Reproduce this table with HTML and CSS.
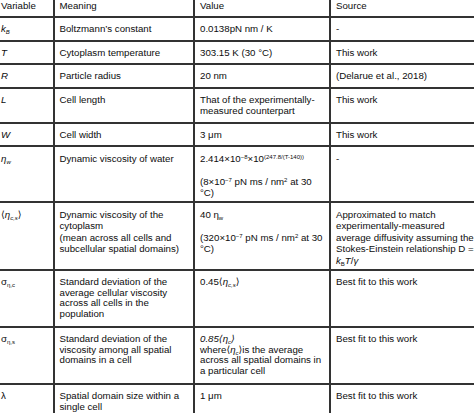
FILE: index.html
```html
<!DOCTYPE html>
<html>
<head>
<meta charset="utf-8">
<link rel="stylesheet" href="styles.css">
</head>
<body>
<div class="frame">
<table class="params">
<colgroup><col class="c1"><col class="c2"><col class="c3"><col class="c4"></colgroup>
<tr class="h23"><td>Variable</td><td>Meaning</td><td>Value</td><td>Source</td></tr>
<tr class="h24"><td><i>k</i><sub><i>B</i></sub></td><td>Boltzmann’s constant</td><td>0.0138pN nm / K</td><td>-</td></tr>
<tr class="h23"><td><i>T</i></td><td>Cytoplasm temperature</td><td>303.15 K (30 °C)</td><td>This work</td></tr>
<tr class="h24"><td><i>R</i></td><td>Particle radius</td><td>20 nm</td><td>(Delarue et al., 2018)</td></tr>
<tr class="h35"><td><i>L</i></td><td>Cell length</td><td>That of the experimentally-<br>measured counterpart</td><td>This work</td></tr>
<tr class="h23"><td><i>W</i></td><td>Cell width</td><td>3 μm</td><td>This work</td></tr>
<tr class="h56 loose"><td><i>η</i><sub><i>w</i></sub></td><td>Dynamic viscosity of water</td><td><p>2.414×10<sup>−8</sup>×10<sup>(247.8/(T-140))</sup></p><p class="gap">(8×10<sup>−7</sup> pN ms / nm<sup>2</sup> at 30<br>°C)</p></td><td>-</td></tr>
<tr class="h68 loose"><td>⟨<i>η</i><sub><i>c,s</i></sub>⟩</td><td>Dynamic viscosity of the<br>cytoplasm<br>(mean across all cells and<br>subcellular spatial domains)</td><td><p>40 η<sub>w</sub></p><p class="gap">(320×10<sup>−7</sup> pN ms / nm<sup>2</sup> at 30<br>°C)</p></td><td>Approximated to match<br>experimentally-measured<br>average diffusivity assuming the<br>Stokes-Einstein relationship D =<br><i>k</i><sub>B</sub><i>T</i>/<i>γ</i></td></tr>
<tr class="h57"><td>σ<sub>η,c</sub></td><td>Standard deviation of the<br>average cellular viscosity<br>across all cells in the<br>population</td><td>0.45⟨<i>η</i><sub><i>c,s</i></sub>⟩</td><td>Best fit to this work</td></tr>
<tr class="h57"><td>σ<sub>η,s</sub></td><td>Standard deviation of the<br>viscosity among all spatial<br>domains in a cell</td><td><i>0.85⟨η<sub>c</sub>⟩</i><br>where⟨<i>η</i><sub><i>c</i></sub>⟩is the average<br>across all spatial domains in<br>a particular cell</td><td>Best fit to this work</td></tr>
<tr class="h40"><td>λ</td><td>Spatial domain size within a<br>single cell</td><td>1 μm</td><td>Best fit to this work</td></tr>
</table>
</div>
</body>
</html>
```

FILE: styles.css
```css
html, body {
  margin: 0;
  padding: 0;
  background: #ffffff;
  overflow: hidden;
}

.frame {
  width: 474px;
  height: 413px;
  overflow: hidden;
}

.params {
  margin-top: -7px;
  margin-left: -6px;
  border-collapse: collapse;
  table-layout: fixed;
  width: 495px;
  font-family: "Liberation Sans", Arial, "DejaVu Sans", sans-serif;
  font-size: 9.7px;
  line-height: 10.6px;
  color: #0d0d0d;
}

.c1 { width: 58.5px; }
.c2 { width: 140.5px; }
.c3 { width: 136px; }
.c4 { width: 160px; }

.params td {
  border: 2px solid #333333;
  padding: 6px 5px 0 5px;
  vertical-align: top;
  white-space: nowrap;
}

.params p {
  margin: 0;
}

.params p.gap {
  margin-top: 11.4px;
}

.loose td {
  line-height: 11.4px;
}

.params sub,
.params sup {
  font-size: 6px;
  line-height: 0;
}

.params sub {
  vertical-align: -2px;
}

.params sup {
  vertical-align: 3.5px;
}

.h23 { height: 23px; }
.h24 { height: 24px; }
.h35 { height: 35px; }
.h40 { height: 40px; }
.h56 { height: 56px; }
.h57 { height: 57px; }
.h68 { height: 68px; }
```
